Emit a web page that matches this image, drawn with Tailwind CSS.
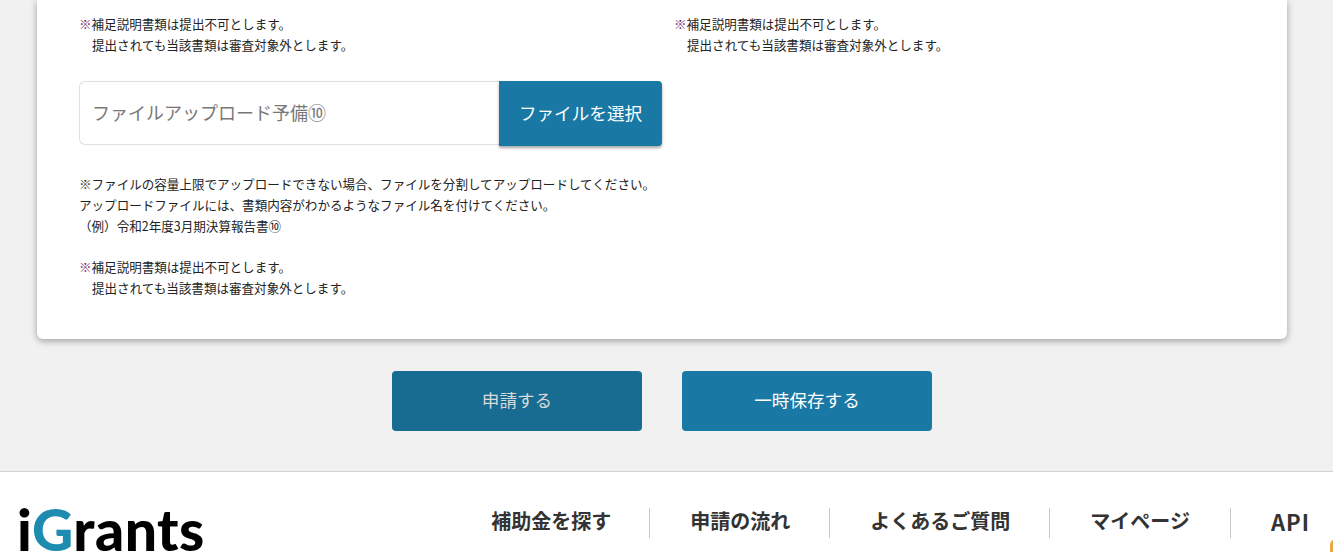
<!DOCTYPE html>
<html lang="ja">
<head>
    <meta charset="UTF-8">
    <title>iGrants</title>
    <script src="https://cdn.jsdelivr.net/npm/@tailwindcss/browser@4"></script>
</head>
<body class="h-[552px] overflow-hidden bg-[#f1f1f1] text-[#222] font-['Noto_Sans_CJK_JP','Noto_Sans',sans-serif]">

    <!-- Form card -->
    <main class="mx-[37px] w-[1250px] h-[339px] bg-white rounded-b-md shadow-[0_2px_7px_rgba(0,0,0,0.35)] pl-[42px] pt-[13px] text-[12.56px] leading-[21px] grid grid-cols-[595px_1fr]">
        <div>
            <p><span class="text-[#6a1268]">※</span>補足説明書類は提出不可とします。</p>
            <p class="pl-[13px]">提出されても当該書類は審査対象外とします。</p>

            <div class="flex w-[583px] h-[64px] mt-[26px]">
                <div class="flex-1 h-full flex items-center pl-[12px] pb-[2px] border border-[#e0e0e0] border-r-0 rounded-l-md text-[18px] text-[#777]">ファイルアップロード予備⑩</div>
                <button class="w-[163px] h-[65px] pb-[3px] bg-[#1a78a5] text-white text-[17.6px] rounded-r-[4px] shadow-[0_2px_3px_rgba(0,0,0,0.35)]">ファイルを選択</button>
            </div>

            <div class="mt-[28px]">
                <p>※ファイルの容量上限でアップロードできない場合、ファイルを分割してアップロードしてください。</p>
                <p>アップロードファイルには、書類内容がわかるようなファイル名を付けてください。</p>
                <p>（例）令和2年度3月期決算報告書⑩</p>
            </div>

            <p class="mt-[20px]"><span class="text-[#6a1268]">※</span>補足説明書類は提出不可とします。</p>
            <p class="pl-[13px]">提出されても当該書類は審査対象外とします。</p>
        </div>
        <div>
            <p><span class="text-[#6a1268]">※</span>補足説明書類は提出不可とします。</p>
            <p class="pl-[13px]">提出されても当該書類は審査対象外とします。</p>
        </div>
    </main>

    <!-- Submit buttons -->
    <div class="flex justify-center gap-10 mt-8 pr-[9px]">
        <button class="w-[250px] h-[60px] pb-[2px] rounded-[4px] bg-[#186b91] text-[#d9d9d9] text-[17.6px]">申請する</button>
        <button class="w-[250px] h-[60px] pb-[2px] rounded-[4px] bg-[#1a78a5] text-white text-[17.6px]">一時保存する</button>
    </div>

    <!-- Footer -->
    <footer class="relative mt-10 h-[100px] bg-white border-t border-[#d2d2d2] flex justify-between items-start overflow-hidden">
        <div class="pl-[17px] pt-[25px] font-['Lato',sans-serif] font-black text-[57px] leading-[64px] text-black tracking-[0.5px]">i<span class="text-[#1e8bb0]">G</span>rants</div>
        <nav class="flex items-center mt-[36px] pr-[23px] text-[20px] leading-[26px] font-bold text-[#333]">
            <a class="h-[30px] pr-[38px]">補助金を探す</a>
            <a class="h-[30px] pl-10 pr-[39px] border-l border-[#c8c8c8]">申請の流れ</a>
            <a class="h-[30px] pl-10 pr-[39px] border-l border-[#c8c8c8]">よくあるご質問</a>
            <a class="h-[30px] px-10 border-l border-[#c8c8c8]">マイページ</a>
            <a class="h-[30px] pl-10 border-l border-[#c8c8c8] text-[22px] tracking-[1px]">API</a>
        </nav>
        <div class="absolute left-[1330px] top-[67px] w-8 h-10 rounded-tl-[6px] bg-[#e8a840]"></div>
    </footer>
</body>
</html>
